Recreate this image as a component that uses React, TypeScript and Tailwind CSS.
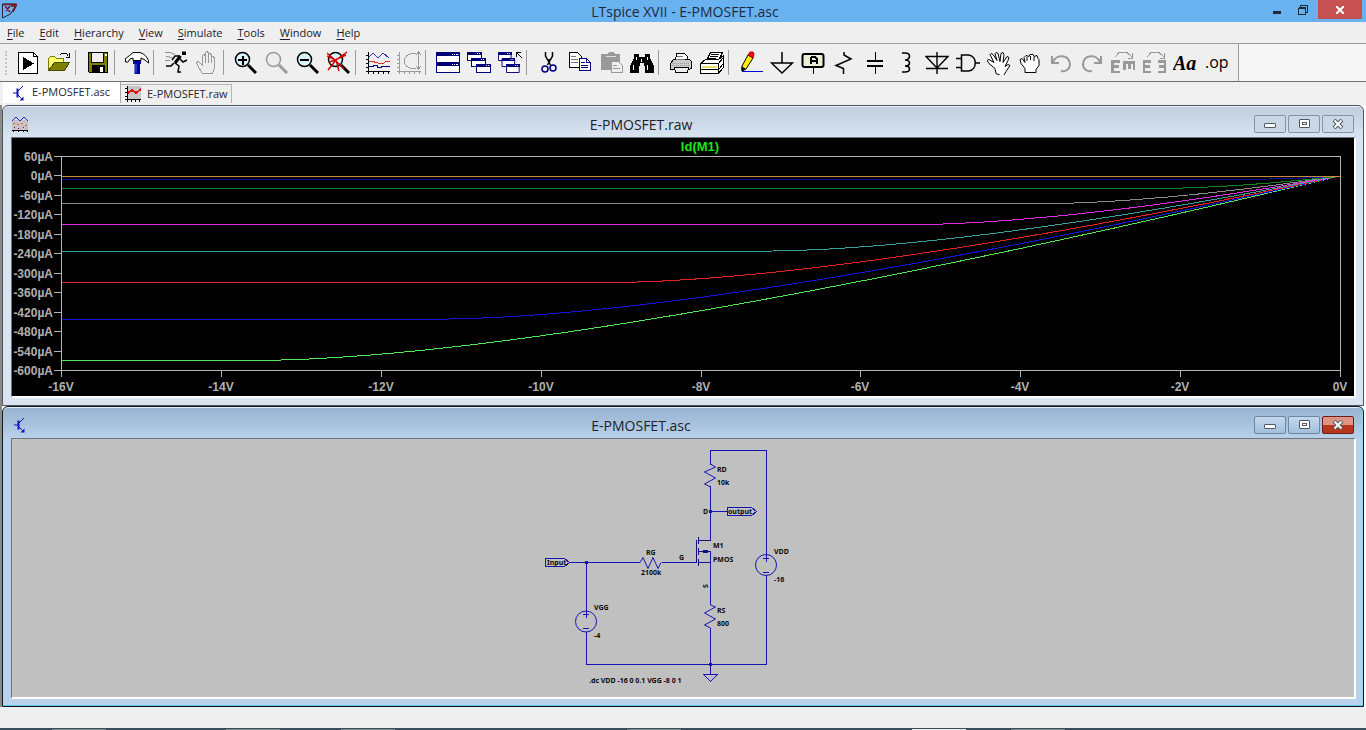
import type { ReactNode } from 'react';

const uiFont = "font-['Open_Sans','Noto_Sans',sans-serif]";

function Icon({ children }: { children: ReactNode }) {
  return (
    <svg viewBox="0 0 24 24" className="h-6 w-6" fill="none" stroke="#000" shapeRendering="crispEdges">
      {children}
    </svg>
  );
}

function Lens({ color = '#000', glass = '#d8f4fb' }: { color?: string; glass?: string }) {
  return (
    <>
      <circle cx="8.5" cy="8.5" r="7" fill={glass} stroke={color} strokeWidth="1.5" shapeRendering="auto" />
      <path d="M14 14l8 8" stroke={color} strokeWidth="3" shapeRendering="auto" />
    </>
  );
}

function MiniWindow({ x, y }: { x: number; y: number }) {
  return (
    <>
      <path d={`M${x + 0.5} ${y + 0.5}h14v8h-14z`} fill="#fff" stroke="#000078" />
      <path d={`M${x} ${y + 1.5}h15`} stroke="#000078" strokeWidth="3" />
      <path d={`M${x + 10} ${y + 1.5}h1M${x + 12} ${y + 1.5}h1`} stroke="#fff" />
    </>
  );
}

const icons: Record<string, ReactNode> = {
  Run: (
    <>
      <path d="M2.500 1.500h15l4 4v17h-19z" fill="#fff" />
      <path d="M17.500 1.500v4h4" />
      <path d="M7 6v13l11-6.500z" fill="#000" stroke="none" />
    </>
  ),
  Open: (
    <>
      <path d="M1.500 19.500v-12l2-2h4l2 2h7v5" fill="#ffff6b" stroke="#7a7a00" />
      <path d="M1.500 19.500l6-8h15l-5 8z" fill="#808000" stroke="#4a4a00" />
      <path d="M12.500 4.500l2-2h5l2 3M22.500 2v4.500h-4" />
    </>
  ),
  Save: (
    <>
      <path d="M2.500 1.500h19v20h-18l-1-1z" fill="#808000" />
      <path d="M5.500 1.500h12v10h-12z" fill="#eee" />
      <path d="M6 14.500h12v7h-12z" fill="#000" />
      <path d="M14 16h3v5h-3z" fill="#fff" stroke="none" />
      <path d="M19 3h1.500v2h-1.500z" fill="#fff" stroke="none" />
    </>
  ),
  'Control Panel': (
    <g shapeRendering="auto">
      <path d="M8 9h8v4h-1v10H9.500V13H8z" fill="#0000a8" stroke="none" />
      <path d="M11 13v9" stroke="#4b6be0" />
      <path d="M.5 11V7.500L4 5l4-3.500h7L18.500 3l3 3 2 3.500V12L20 9l-4-2v2.500H8V7L5 8l-2 3z" fill="#fff" />
    </g>
  ),
  'Run Simulation': (
    <g shapeRendering="auto">
      <path d="M18 0.500h4v3.500h-4z" fill="#000" stroke="none" />
      <path d="M16.500 5l-5.500 7" strokeWidth="3" />
      <path d="M11 12l4 3-1 6h3M10 12l-3 3H2M16 5h-5l-3 4M16 8l3 3 4-2" strokeWidth="1.500" />
      <path d="M1 1.500h5l5 2M2 5.500l6 1M1 9.500h5" stroke="#888" />
    </g>
  ),
  Halt: (
    <path
      d="M7.500 22.500l-5-8-1-3 2-1 4 4V4.500l1-1 2 1v-3l1-1 2 1v2l1-1 2 1v3l1-1 2 1v10l-2 6zM10.500 4v8M13.500 3v9M16.500 5v7"
      fill="#eee"
      stroke="#999"
    />
  ),
  'Zoom In': (
    <>
      <Lens />
      <path d="M4 9h9M8.500 4.500v9" strokeWidth="2" />
    </>
  ),
  'Zoom Pan': <Lens color="#9a9a9a" glass="#eee" />,
  'Zoom Out': (
    <>
      <Lens />
      <path d="M4 9h9" strokeWidth="2" />
    </>
  ),
  'Zoom Fit': (
    <>
      <Lens />
      <path d="M0 2l8 7 9 9M20 1L9 9 1 19M0 5l8 4 11-5M2 11l7-2 3 11" stroke="#d40000" strokeWidth="1.500" shapeRendering="auto" />
    </>
  ),
  'Pick Visible Traces': (
    <>
      <path d="M2.500 1v22M0 20.500h24M0 4.500h3M0 8.500h3M0 12.500h3M0 16.500h3M7.500 20v3M12.500 20v3M17.500 20v3M22.500 20v3" />
      <path d="M3 6l4-4 5 5 5-5 6 5" stroke="#3030b0" />
      <path d="M3 10.500h4l3 1 4 1h3l3-2h4" stroke="#d43020" />
      <path d="M3 15.500h4v-1h4v2h4v-1h9" stroke="#000090" />
    </>
  ),
  'Autorange Y-axis': (
    <g stroke="#999">
      <path d="M2.500 1v22M0 20.500h24M0 4.500h3M0 8.500h3M0 12.500h3M0 16.500h3M7.500 20v3M12.500 20v3M17.500 20v3M22.500 20v3" />
      <path d="M19 2.500h-5l-4 2-3 4v3l3 4 4 2h5M21.500 1v18M19 4l2.500-3L24 4M19 15l2.500 3 2.500-3" />
    </g>
  ),
  'Tile Windows': (
    <>
      <path d="M.5 1.500h23v20h-23z" fill="#fff" stroke="#000078" />
      <path d="M0 3h24M0 13h24" stroke="#000078" strokeWidth="4" />
      <path d="M16 3h1M18 3h1M20 3h2M16 13h1M18 13h1M20 13h2" stroke="#fff" />
    </>
  ),
  'Cascade Windows': (
    <>
      <MiniWindow x={0} y={1} />
      <MiniWindow x={4} y={7} />
      <MiniWindow x={9} y={13} />
    </>
  ),
  'Close All Windows': (
    <>
      <g transform="scale(.9 1)">
        <MiniWindow x={0} y={1} />
        <MiniWindow x={4} y={7} />
        <MiniWindow x={9} y={13} />
      </g>
      <path d="M17 1h10v8h-10z" fill="#efefef" stroke="none" />
      <path d="M18.500 6V1.500H23M19 2l5 5" />
    </>
  ),
  Cut: (
    <g shapeRendering="auto">
      <path d="M8.500 1v4l5 9M15.500 1v4l-5 9M12 8v5" strokeWidth="1.500" />
      <circle cx="8" cy="18" r="3" stroke="#000078" strokeWidth="1.500" />
      <circle cx="16" cy="17" r="3" stroke="#000078" strokeWidth="1.500" />
    </g>
  ),
  Copy: (
    <>
      <path d="M1.500 1.500h8l4 4v11h-12z" fill="#fff" />
      <path d="M3 5.500h5M3 8.500h7M3 11.500h7" stroke="#777" />
      <path d="M11.500 7.500h7l4 4v8h-11z" fill="#fff" stroke="#000078" />
      <path d="M18.500 7.500v4h4M13 11.500h4M13 14.500h7M13 16.500h7" stroke="#000078" />
    </>
  ),
  Paste: (
    <>
      <path d="M2 3h6l2-2h4l2 2h5v16H2z" fill="#999" stroke="none" />
      <path d="M7 5.500h10" stroke="#ddd" />
      <path d="M12.500 10.500h7l4 4v7h-11z" fill="#eee" stroke="#999" />
      <path d="M14 14.500h4M14 17.500h7" stroke="#999" />
    </>
  ),
  Find: (
    <>
      <path d="M4 3h5v3h6V3h5v4l4 8v7h-9v-7h-1v-3h-4v3H9v7H0v-7l4-8z" fill="#000" stroke="none" />
      <path d="M6.500 6v3M17.500 6v3M3.500 14v5M11.500 8v3M17.500 14v5" stroke="#fff" />
    </>
  ),
  Print: (
    <>
      <path d="M6.500 9.500l1-7h8l3 3v4" fill="#fff" />
      <path d="M1.500 17.500v-5l3-4h16l2 2v7l-3 1H2z" fill="#ccc" />
      <path d="M5.500 16.500h14l-1 5h-12z" fill="#eee" />
      <path d="M8 5.500h6M7 8.500h9" stroke="#777" />
      <path d="M3 12.500h18M3 14.500h18" stroke="#999" strokeDasharray="1 1" />
    </>
  ),
  'Print Setup': (
    <>
      <path d="M6.500 9.500l4-8h12l-4 8z" fill="#fff" />
      <path d="M.5 12.500l5-4h13l5-4v12l-5 6H.5z" fill="#fff" />
      <path d="M.5 12.500h18v9.500M18.500 12.500l5-6M11 3.500h8M10 5.500h8M8 7.500h8M1 18.500h17M19 18l4-5" />
      <path d="M2 15.500h15" stroke="#e6e06a" strokeWidth="2" />
    </>
  ),
  'Draw Wire': (
    <>
      <path d="M3 20.500h21" stroke="#0000d0" />
      <g shapeRendering="auto">
        <path d="M3 20v-5l6-11 5 3-7 11z" fill="#ffee00" />
        <path d="M9 4l2-3h3l1 2-1 4z" fill="#f01010" stroke="#a00" />
        <path d="M3 20v-4l3 2z" fill="#000" />
      </g>
    </>
  ),
  Ground: <path d="M12 1v11M1.500 12h21L12 22z" strokeWidth="1.500" shapeRendering="auto" />,
  'Label Net': (
    <>
      <rect x="1.500" y="3" width="21" height="13" rx="2" fill="#eeeed5" strokeWidth="2" shapeRendering="auto" />
      <path d="M12.500 17v6" />
      <path d="M9.500 13V7l2-1.500h2l2 1.500v6M10 10h5" strokeWidth="2" />
    </>
  ),
  Resistor: <path d="M12 1v3l7 4L4 14.500l7.500 3V23" strokeWidth="1.500" shapeRendering="auto" />,
  Capacitor: (
    <>
      <path d="M12.500 1v9M12.500 15v8" />
      <path d="M4 10h16M4 15h16" strokeWidth="2" />
    </>
  ),
  Inductor: (
    <path d="M8 2h3c6 0 6 6 0 7 6 0 6 6 0 6 6 0 6 6 0 6H8" strokeWidth="1.600" shapeRendering="auto" />
  ),
  Diode: <path d="M12 1v22M1 5.500h22L12 17zM1 17.500h22" strokeWidth="1.400" shapeRendering="auto" />,
  Component: (
    <path d="M0 7.500h6M0 16.500h6M5.500 4v16h7c9-1 9-15 0-16zM19 12h5" strokeWidth="1.500" shapeRendering="auto" />
  ),
  Move: (
    <path
      d="M9 22.500l-1-5-6-5-2-3 2-1 5 3-4-8 1-1 2 1 4 6-2-7 1-1 2 1 2 8 1-8 2-1 1 2-1 8 4-6 2 1-1 3-3 6 3-2 2 1-4 6-3 5z"
      fill="#fff"
      shapeRendering="auto"
    />
  ),
  Drag: (
    <path
      d="M7 21.500v-4l-4-5-1-4 2-1 3 4-1-5 2-2 3 1 1-2h3l1 2 3-1 1 3 1 1v6l-3 4v3zM9 6v4M12.500 5v4M16 6v4"
      fill="#fff"
      shapeRendering="auto"
    />
  ),
  Undo: (
    <path d="M3 5v7h7M4 11C7 3 20 3 21 13c0 5-4 8-9 7" stroke="#999" strokeWidth="2" shapeRendering="auto" />
  ),
  Redo: (
    <path d="M21 5v7h-7M20 11C17 3 4 3 3 13c0 5 4 8 9 7" stroke="#999" strokeWidth="2" shapeRendering="auto" />
  ),
  Rotate: (
    <g stroke="#999">
      <path d="M4 6l4-4.500h8l5 4.500M21.500 2v5H17" />
      <path d="M9 10.500H1.500V21H9M1 15.500h7" strokeWidth="2.500" />
      <path d="M12 11.500h12M13.500 11v8M18.500 11v7M23 11v8" strokeWidth="2.500" />
    </g>
  ),
  Mirror: (
    <g stroke="#999">
      <path d="M5 6l4-4.500h8l5 4.500M22.500 2v5H18" />
      <path d="M9 10.500H2V21h7M2 15.500h6M16 10.500h7V21h-7M23 15.500h-6" strokeWidth="2.500" />
    </g>
  ),
  Text: (
    <text x="0" y="19" fontSize="20" fontWeight="700" fontStyle="italic" fontFamily="Liberation Serif, serif" fill="#000" stroke="none">
      Aa
    </text>
  ),
  'SPICE Directive': (
    <text x="1" y="17" fontSize="16" fontFamily="Open Sans, sans-serif" fill="#000" stroke="none">
      .op
    </text>
  ),
};

const toolGroups = [
  ['Run', 'Open'],
  ['Save'],
  ['Control Panel'],
  ['Run Simulation', 'Halt'],
  ['Zoom In', 'Zoom Pan', 'Zoom Out', 'Zoom Fit'],
  ['Pick Visible Traces', 'Autorange Y-axis'],
  ['Tile Windows', 'Cascade Windows', 'Close All Windows'],
  ['Cut', 'Copy', 'Paste', 'Find'],
  ['Print', 'Print Setup'],
  [
    'Draw Wire', 'Ground', 'Label Net', 'Resistor', 'Capacitor', 'Inductor', 'Diode', 'Component',
    'Move', 'Drag', 'Undo', 'Redo', 'Rotate', 'Mirror', 'Text', 'SPICE Directive',
  ],
];

function TitleBar() {
  return (
    <header className="flex h-[22px] items-start bg-[#69b2f0]">
      <div className="w-[104px] pl-[2px] pt-[3px]">
        <svg viewBox="0 0 16 16" className="h-4 w-4" fill="none">
          <path d="M.5 1v14l8-4 6-10z" stroke="#223" />
          <path d="M1 1.500h14M3 3l5 6M8 3L4 8M9 3h5l-3 6" stroke="#801525" strokeWidth="1.500" />
        </svg>
      </div>
      <h1 className="flex-1 text-center text-[14px] leading-[24px] text-[#1d2a3a]">LTspice XVII - E-PMOSFET.asc</h1>
      <div className="flex pr-1">
        <button aria-label="Minimize" className="flex h-[19px] w-[22px] items-end justify-center pb-[5px]">
          <span className="h-[3px] w-2 bg-[#1c2a3a]" />
        </button>
        <button aria-label="Restore" className="flex h-[19px] w-[30px] items-center justify-center">
          <svg viewBox="0 0 10 10" className="h-[10px] w-[10px]" fill="none" stroke="#1c2a3a" shapeRendering="crispEdges">
            <path d="M2.500 3V.5h7v7H8M.5 3.500h7v6h-7zM.5 2.500h7" />
          </svg>
        </button>
        <button aria-label="Close" className="flex h-[19px] w-[44px] items-center justify-center bg-[#c75050]">
          <svg viewBox="0 0 8 8" className="h-2 w-2" stroke="#fff" strokeWidth="2">
            <path d="M0 0l8 8M8 0L0 8" />
          </svg>
        </button>
      </div>
    </header>
  );
}

const menus = ['File', 'Edit', 'Hierarchy', 'View', 'Simulate', 'Tools', 'Window', 'Help'];

function MenuBar() {
  return (
    <nav className="flex h-[21px] items-center gap-[15px] bg-[#efefef] px-[7px]">
      {menus.map((menu) => (
        <button key={menu} className="text-[11px] leading-[20px] text-[#231a26]">
          <span className="underline underline-offset-2">{menu[0]}</span>
          {menu.slice(1)}
        </button>
      ))}
    </nav>
  );
}

function Toolbar() {
  return (
    <div className="flex h-[39px] border-y border-t-[#9c9c9c] border-b-[#6f6f6f] bg-[#f6f6f6]">
      <div className="flex items-center border-r border-[#9c9c9c] bg-[#efefef] pr-[7px]">
        <span className="ml-[5px] mr-[5px] h-6 border-l-2 border-dotted border-[#c2c2c2]" />
        {toolGroups.map((group, i) => (
          <div key={group[0]} className="flex items-center">
            {i > 0 && <span className="mr-[6px] ml-px h-[25px] w-px bg-[#9c9c9c]" />}
            {group.map((name) => (
              <button key={name} aria-label={name} className="flex h-9 w-[31px] items-center justify-center">
                <Icon>{icons[name]}</Icon>
              </button>
            ))}
          </div>
        ))}
      </div>
    </div>
  );
}

function TransistorIcon() {
  return (
    <svg viewBox="0 0 16 16" className="h-4 w-4" fill="none" stroke="#1010c0">
      <path d="M2 8h4M12 1L6.500 6.500M6.500 9.500l4 4" />
      <path d="M6.500 3.500v9" strokeWidth="2" />
      <path d="M12.500 15.500v-4l-4 4z" fill="#1010c0" stroke="none" />
    </svg>
  );
}

function WaveformIcon() {
  return (
    <svg viewBox="0 0 16 16" className="h-4 w-4" fill="none" shapeRendering="crispEdges">
      <path d="M0 4h16v10H0z" fill="#c9c0c8" />
      <path d="M0 5l4-4 4 4 4-4 4 4" stroke="#2a2ab8" />
      <path d="M1 7.500h2M5 8.500h2M9 7.500h2M13 9.500h2" stroke="#d07030" />
      <path d="M2 11.500h1M6 12.500h1M11 11.500h1" stroke="#333" />
      <path d="M0 14.500h16M1.500 14v2M6.500 14v2M11.500 14v2M15.500 14v2" stroke="#000" />
    </svg>
  );
}

function Tabs() {
  return (
    <div className="flex h-[23px] items-start bg-[#f0f0f0] pl-[3px] text-[11px] whitespace-nowrap text-[#2a2530]">
      <button className="flex h-[21px] w-[118px] items-center gap-[5px] border-r border-[#a8a8a8] bg-white pl-[8px]">
        <TransistorIcon />
        E-PMOSFET.asc
      </button>
      <button className="mt-[2px] flex h-[19px] w-[111px] items-center gap-[6px] border-r border-t border-[#b4b4b4] bg-[#efefef] pl-[4px]">
        <svg viewBox="0 0 16 16" className="h-4 w-4" fill="none" shapeRendering="crispEdges">
          <path d="M2 0h14v14H2z" fill="#c6c6c6" />
          <path d="M2.500 0v16M0 13.500h16M0 2.500h3M0 6.500h3M0 10.500h3M6.500 13v3M10.500 13v3M14.500 13v3" stroke="#000" />
          <path d="M3 7l4-3 4 3 5-4" stroke="#e01010" strokeWidth="2" />
        </svg>
        E-PMOSFET.raw
      </button>
    </div>
  );
}

interface ChildWindowProps {
  title: string;
  icon: ReactNode;
  active?: boolean;
  children: ReactNode;
}

function ChildWindow({ title, icon, active = false, children }: ChildWindowProps) {
  const frame = active
    ? 'border-[#101820] bg-linear-to-b from-[#96b2d0] to-[#b9d1ea] to-[31px] shadow-[inset_0_-1px_0_#5fc8f4,inset_-1px_0_0_#8fd8f4,inset_0_1px_0_#e6eff8]'
    : 'border-[#4d545c] bg-linear-to-b from-[#bfcddd] to-[#d9e4f1] to-[31px] shadow-[inset_0_1px_0_#eef3f8]';
  const caption = `flex h-[18px] w-8 items-center justify-center rounded-[2px] border ${
    active ? 'border-[#6d87a5] bg-linear-to-b from-[#c4d8ed] to-[#a3bfdc]' : 'border-[#8294aa] bg-[#c9d7e7]'
  }`;
  const closeStyle = active
    ? 'flex h-[18px] w-8 items-center justify-center rounded-[2px] border border-[#6b1f1c] bg-linear-to-b from-[#dd9484] from-50% to-[#b8361c] to-50%'
    : caption;

  return (
    <section className={`rounded-t-[6px] border pr-[7px] pb-[7px] pl-[8px] ${frame}`}>
      <div className="flex h-[31px] items-center">
        <span className="mt-[4px] ml-px">{icon}</span>
        <h2 className="flex-1 pt-[6px] text-center text-[14px] leading-[20px] text-[#1b2128]">{title}</h2>
        <div className="mt-[4px] flex gap-[2px] pr-[2px]">
          <button aria-label={`Minimize ${title}`} className={caption}>
            <span className="mt-[3px] h-[5px] w-[12px] rounded-[1px] border border-[#4f5965] bg-white" />
          </button>
          <button aria-label={`Maximize ${title}`} className={caption}>
            <span className="flex h-[9px] w-[11px] items-center justify-center rounded-[1px] border border-[#4f5965] bg-white">
              <span className="h-[3px] w-[5px] border border-[#4f5965]" />
            </span>
          </button>
          <button aria-label={`Close ${title}`} className={closeStyle}>
            <svg viewBox="0 0 12 10" className="h-[10px] w-3">
              <path d="M2 1l8 8M10 1L2 9" stroke="#4f5965" strokeWidth="4" />
              <path d="M2.500 1.500l7 7M9.500 1.500l-7 7" stroke="#fff" strokeWidth="2" />
            </svg>
          </button>
        </div>
      </div>
      <div className="border-t border-r-2 border-b-2 border-l border-t-[#6b747e] border-r-white border-b-white border-l-[#6b747e]">
        {children}
      </div>
    </section>
  );
}

const BETA = 2e-5;
const R_DRAIN = 10000;
const R_SOURCE = 800;

// drain current magnitude for a supply and gate voltage, found by bisection
function drainCurrent(vdd: number, vgg: number) {
  let low = 0;
  let high = 0.001;
  for (let i = 0; i < 40; i++) {
    const id = (low + high) / 2;
    const vgs = Math.max(vgg - id * R_SOURCE, 0);
    const vds = Math.min(Math.max(vdd - id * (R_DRAIN + R_SOURCE), 0), vgs);
    const model = BETA * (vgs * vds - (vds * vds) / 2);
    if (model > id) low = id;
    else high = id;
  }
  return low * 1e6;
}

const xAt = (volts: number) => 1340.5 + volts * 79.9375;
const yAt = (microamps: number) => 156.5 + (60 - microamps) * 0.3243;

const traces = [
  { vgg: 8, color: '#50e850' },
  { vgg: 7, color: '#1414e0' },
  { vgg: 6, color: '#e82020' },
  { vgg: 5, color: '#38a09c' },
  { vgg: 4, color: '#e02ce0' },
  { vgg: 3, color: '#8c8c8c' },
  { vgg: 2, color: '#0c8420' },
  { vgg: 1, color: '#0c0ca0' },
  { vgg: 0, color: '#c88840' },
];

function tracePoints(vgg: number) {
  const points: string[] = [];
  for (let step = 0; step <= 160; step++) {
    const vdd = 16 - step / 10;
    points.push(`${xAt(-vdd).toFixed(1)},${yAt(-drainCurrent(vdd, vgg)).toFixed(1)}`);
  }
  return points.join(' ');
}

const yTicks = [60, 0, -60, -120, -180, -240, -300, -360, -420, -480, -540, -600];
const xTicks = [-16, -14, -12, -10, -8, -6, -4, -2, 0];

function Plot() {
  return (
    <svg viewBox="12 138 1342 258" className="block h-auto w-full bg-black font-['Liberation_Sans',Arial,sans-serif]">
      <text x="700" y="151" textAnchor="middle" fontSize="13" fontWeight="700" fill="#19e619">
        Id(M1)
      </text>
      <g fill="none" stroke="#b4b4b4" shapeRendering="crispEdges">
        <rect x="61.5" y="156.5" width="1279" height="214" />
        {yTicks.map((tick) => (
          <path key={tick} d={`M54 ${Math.floor(yAt(tick)) + 0.5}h7`} />
        ))}
        {xTicks.map((tick) => (
          <path key={tick} d={`M${Math.floor(xAt(tick)) + 0.5} 371v6`} />
        ))}
      </g>
      <g fontSize="12" fontWeight="700" fill="#b0b0b0">
        {yTicks.map((tick) => (
          <text key={tick} x="53" y={Math.floor(yAt(tick)) + 5} textAnchor="end">
            {tick}µA
          </text>
        ))}
        {xTicks.map((tick) => (
          <text key={tick} x={Math.floor(xAt(tick))} y="391" textAnchor="middle">
            {tick}V
          </text>
        ))}
      </g>
      <g fill="none" shapeRendering="crispEdges">
        {traces.map(({ vgg, color }) => (
          <polyline key={vgg} points={tracePoints(vgg)} stroke={color} />
        ))}
      </g>
    </svg>
  );
}

function Schematic() {
  return (
    <svg viewBox="12 439 1342 258" className="block h-auto w-full bg-[#c0c0c0] font-['Noto_Sans','Open_Sans',sans-serif]">
      <g fill="none" stroke="#1414b4" shapeRendering="crispEdges">
        {/* wires */}
        <path d="M710.5 465v-14.500h56v105M766.500 575v89.500h-180V632M586.500 611v-48.500M569 562.500h71M662 562.500h34M710.500 486v54.500M710.500 511.500h17M710.500 551v52M710.500 628v46" />
        {/* supply symbols */}
        <g shapeRendering="auto">
          <circle cx="766" cy="565" r="10.500" />
          <circle cx="586" cy="621.500" r="10.500" />
        </g>
        <path d="M763 558.500h6M766.500 555v7M763 572.500h6M583 614.500h6M586.500 611v7M583 628.500h6" />
        {/* ground and ports */}
        <path d="M703.500 674.500h14l-7 7z" />
        <path d="M545.500 558.500h19l5 4-5 4h-19zM727.500 507.500h24l5 4-5 4h-24z" />
      </g>
      <g fill="none" stroke="#1414b4">
        <path d="M710.500 464l5 3-11 5 11 6-11 6 6 3" />
        <path d="M710.500 602v3l5 2-11 6 11 6-11 6 6 3" />
        <path d="M640 562.500l3-5 5 11 5-11 5 11 3-6" />
      </g>
      <g fill="none" stroke="#101080" shapeRendering="crispEdges">
        <path d="M696.500 540v22.500M698.500 537v7M698.500 548v7M698.500 559v7M698 540.500h12.500M698 551.500h12M698 562.500h12" />
        <path d="M702 551.500l2-1h3v2h-3z" />
      </g>
      <g fill="#1414b4">
        <rect x="585" y="561" width="3" height="3" />
        <rect x="709" y="510" width="3" height="3" />
        <rect x="709" y="663" width="3" height="3" />
      </g>
      <g fontSize="7" fontWeight="700" fill="#0a0a0a">
        <text x="717" y="472">RD</text>
        <text x="717" y="485">10k</text>
        <text x="703" y="514">D</text>
        <text x="728" y="514">output</text>
        <text x="713" y="548">M1</text>
        <text x="713" y="562">PMOS</text>
        <text x="774" y="554">VDD</text>
        <text x="774" y="582">-16</text>
        <text x="646" y="555">RG</text>
        <text x="641" y="575">2100k</text>
        <text x="679" y="560">G</text>
        <text x="547" y="565">Input</text>
        <text x="594" y="610">VGG</text>
        <text x="594" y="638">-4</text>
        <text transform="translate(708 588) rotate(-90)">S</text>
        <text x="717" y="613">RS</text>
        <text x="717" y="626">800</text>
        <text x="589" y="683">.dc VDD -16 0 0.1 VGG -8 0 1</text>
      </g>
    </svg>
  );
}

function TaskbarEdge() {
  return (
    <div className="flex h-[2px] bg-[#3a4d5a]">
      <span className="mt-px ml-[52px] w-[54px] bg-[#7d8a8c]" />
      <span className="mt-px ml-[120px] w-[54px] bg-[#7d8a8c]" />
      <span className="mt-px ml-[61px] w-[54px] bg-[#7d8a8c]" />
      <span className="mt-px ml-[232px] w-[54px] bg-[#7d8a8c]" />
      <span className="mt-px ml-[231px] w-[54px] bg-[#e8eeee]" />
      <span className="mt-px ml-[45px] w-[54px] bg-[#7d8a8c]" />
    </div>
  );
}

export default function App() {
  return (
    <div className={`flex min-h-screen flex-col bg-[#f0f0f0] ${uiFont}`}>
      <TitleBar />
      <MenuBar />
      <Toolbar />
      <Tabs />
      <main className="flex-1 border-l-2 border-[#8a8a8a] bg-white pr-[2px]">
        <ChildWindow title="E-PMOSFET.raw" icon={<WaveformIcon />}>
          <Plot />
        </ChildWindow>
        <ChildWindow title="E-PMOSFET.asc" icon={<TransistorIcon />} active>
          <Schematic />
        </ChildWindow>
      </main>
      <footer className="mt-[2px] h-[19px] bg-[#efefef]" />
      <TaskbarEdge />
    </div>
  );
}
